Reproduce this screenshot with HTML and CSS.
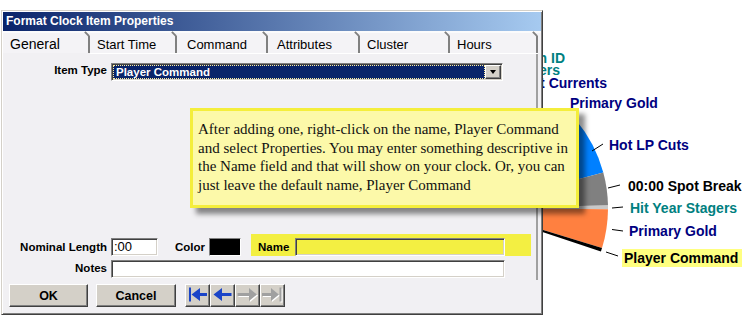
FILE: index.html
```html
<!DOCTYPE html>
<html lang="en">
<head>
  <meta charset="UTF-8">
  <title>Format Clock Item Properties</title>
  <link rel="stylesheet" href="styles.css">
</head>
<body>
  <!-- clock pie behind the dialog -->
  <svg class="chart" width="747" height="331" viewBox="0 0 747 331">
    <path fill="#0080ff" d="M471 208 L575.9 119.9 A137 137 0 0 1 603.3 172.5 Z"/>
    <path fill="#808080" d="M471 208 L603.3 172.5 A137 137 0 0 1 608 205.6 Z"/>
    <path fill="#c8c8c8" d="M471 208 L608 205.6 A137 137 0 0 1 608 209.2 Z"/>
    <path fill="#ff8040" d="M471 208 L608 209.2 A137 137 0 0 1 602 248.1 Z"/>
    <path fill="#000000" d="M471 208 L602 248.1 A137 137 0 0 1 600.9 251.5 Z"/>

    <g class="leaders">
      <line x1="592" y1="151" x2="603" y2="144"/>
      <line x1="608" y1="188" x2="620" y2="185"/>
      <line x1="612" y1="208" x2="623" y2="207"/>
      <line x1="612" y1="229.5" x2="623" y2="231"/>
      <line x1="606" y1="252" x2="618" y2="256"/>
    </g>

    <rect x="622" y="249" width="120" height="18" fill="#ffff80"/>

    <text class="lbl teal" x="565" y="63" text-anchor="end">Station ID</text>
    <text class="lbl teal" x="560" y="75" text-anchor="end">Stagers</text>
    <text class="lbl navy" x="607" y="88" text-anchor="end">Hot Currents</text>
    <text class="lbl navy" x="570" y="108">Primary Gold</text>
    <text class="lbl navy" x="609" y="150">Hot LP Cuts</text>
    <text class="lbl" x="628" y="191">00:00 Spot Break</text>
    <text class="lbl teal" x="630" y="213">Hit Year Stagers</text>
    <text class="lbl navy" x="629" y="236">Primary Gold</text>
    <text class="lbl" x="624" y="263">Player Command</text>
  </svg>

  <div class="dialog">
    <div class="titlebar">Format Clock Item Properties</div>

    <div class="tabs">
      <div class="tab tab-general">General</div>
      <div class="tab tab-start">Start Time</div>
      <div class="tab tab-command">Command</div>
      <div class="tab tab-attributes">Attributes</div>
      <div class="tab tab-cluster">Cluster</div>
      <div class="tab tab-hours">Hours</div>
    </div>

    <div class="panel">
      <div class="row row-type">
        <label class="field-label">Item Type</label>
        <div class="select">
          <div class="select-value">Player Command</div>
          <div class="select-btn"><span class="caret"></span></div>
        </div>
      </div>

      <div class="row row-nominal">
        <label class="field-label">Nominal Length</label>
        <div class="input input-length">:00</div>
        <label class="color-label">Color</label>
        <div class="swatch"></div>
        <div class="name-band">
          <label class="name-label">Name</label>
          <div class="input input-name"></div>
        </div>
      </div>

      <div class="row row-notes">
        <label class="field-label">Notes</label>
        <div class="input input-notes"></div>
      </div>
    </div>

    <div class="buttons">
      <button class="btn btn-ok">OK</button>
      <button class="btn btn-cancel">Cancel</button>
      <div class="nav">
        <button class="btn nav-btn">
          <svg width="23" height="21" viewBox="0 0 23 21">
            <rect class="arrow-on" x="3" y="2.5" width="2" height="14"/>
            <polygon class="arrow-on" points="5.5,9.5 14,3 14,8 21,8 21,11 14,11 14,16"/>
          </svg>
        </button>
        <button class="btn nav-btn">
          <svg width="23" height="21" viewBox="0 0 23 21">
            <polygon class="arrow-on" points="2.5,9.5 11,3 11,8 20.5,8 20.5,11 11,11 11,16"/>
          </svg>
        </button>
        <button class="btn nav-btn">
          <svg width="23" height="21" viewBox="0 0 23 21">
            <polygon class="arrow-shade" transform="translate(1 1)" points="1.5,8 13,8 13,3 21,9.5 13,16 13,11 1.5,11"/>
            <polygon class="arrow-off" points="1.5,8 13,8 13,3 21,9.5 13,16 13,11 1.5,11"/>
          </svg>
        </button>
        <button class="btn nav-btn">
          <svg width="23" height="21" viewBox="0 0 23 21">
            <g class="arrow-shade" transform="translate(1 1)">
              <polygon points="1,8 10,8 10,3 18,9.5 10,16 10,11 1,11"/>
              <rect x="18.5" y="2.5" width="2" height="14"/>
            </g>
            <polygon class="arrow-off" points="1,8 10,8 10,3 18,9.5 10,16 10,11 1,11"/>
            <rect class="arrow-off" x="18.5" y="2.5" width="2" height="14"/>
          </svg>
        </button>
      </div>
    </div>
  </div>

  <div class="tip">After adding one, right-click on the name, Player Command<br>and select Properties. You may enter something descriptive in<br>the Name field and that will show on your clock. Or, you can<br>just leave the default name, Player Command</div>
</body>
</html>
```

FILE: styles.css
```css
body {
  margin: 0;
  width: 747px;
  height: 331px;
  position: relative;
  overflow: hidden;
  background-color: #fff;
  font-family: "Liberation Sans", Arial, sans-serif;
  color: #000;
}

/* pie chart canvas */
.chart {
  position: absolute;
  left: 0;
  top: 0;
}

.leaders line {
  stroke: #000;
  stroke-width: 1;
}

.lbl {
  font-family: "Liberation Sans", Arial, sans-serif;
  font-weight: bold;
  font-size: 14px;
  fill: #000;
}

.lbl.navy {
  fill: #000080;
}

.lbl.teal {
  fill: #008080;
}

/* dialog window */
.dialog {
  position: relative;
  z-index: 1;
  width: 542px;
  height: 305px;
  margin: 10px 0 0 1px;
  padding: 1px;
  box-sizing: border-box;
  background-color: #f1f0f3;
  border: 1px solid;
  border-color: #d4d0c8 #404040 #404040 #d4d0c8;
  box-shadow: inset 1px 1px #fff, inset -1px -1px #808080;
}

.titlebar {
  height: 19px;
  line-height: 19px;
  padding-left: 3px;
  background: linear-gradient(to right, #0a246a, #a6caf0);
  color: #fff;
  font-weight: bold;
  font-size: 12px;
  white-space: nowrap;
}

.tabs {
  display: flex;
  height: 22px;
  border-top: 2px solid #fbfbfc;
  box-sizing: border-box;
  background-color: #f4f3f6;
}

.tab {
  position: relative;
  height: 17px;
  margin-top: 3px;
  box-sizing: border-box;
  border-right: 2px solid #808080;
  font-size: 13px;
  line-height: 17px;
  padding-left: 7px;
  white-space: nowrap;
}

.tab::before {
  content: "";
  position: absolute;
  right: 0;
  top: -5px;
  width: 2px;
  height: 6px;
  background-color: #808080;
  transform: rotate(-45deg);
}

.tab + .tab {
  box-shadow: 0 1px #fff;
}

.tab-general {
  width: 87px;
  font-size: 14px;
}

.tab-start {
  width: 87px;
}

.tab-command {
  width: 91px;
  padding-left: 10px;
}

.tab-attributes {
  width: 92px;
  padding-left: 9px;
}

.tab-cluster {
  width: 90px;
}

.tab-hours {
  width: 88px;
}

/* general page */
.panel {
  width: 535px;
  height: 227px;
  box-sizing: border-box;
  padding-top: 10px;
  border-right: 2px solid #a0a0a0;
}

.row {
  display: flex;
}

.field-label,
.color-label,
.name-label {
  font-weight: bold;
  font-size: 11.5px;
  line-height: 17px;
  white-space: nowrap;
}

.field-label {
  width: 104px;
  margin-right: 4px;
  text-align: right;
}

.row-type {
  height: 18px;
}

.row-type .field-label {
  line-height: 15px;
}

.select {
  display: flex;
  width: 392px;
  height: 18px;
  box-sizing: border-box;
  padding: 1px;
  border: 1px solid;
  border-color: #808080 #fff #fff #808080;
  box-shadow: inset 1px 1px #404040, inset -1px -1px #d4d0c8;
  background-color: #fff;
}

.select-value {
  flex: 1;
  box-sizing: border-box;
  border: 1px dotted #fff0a0;
  background-color: #0a246a;
  color: #fff;
  font-weight: bold;
  font-size: 11.5px;
  line-height: 12px;
  padding-left: 2px;
}

.select-btn {
  display: flex;
  align-items: center;
  justify-content: center;
  width: 16px;
  box-sizing: border-box;
  background-color: #d4d0c8;
  border: 1px solid;
  border-color: #fff #404040 #404040 #fff;
  box-shadow: inset -1px -1px #808080;
}

.caret {
  width: 0;
  height: 0;
  border-left: 3.5px solid transparent;
  border-right: 3.5px solid transparent;
  border-top: 4px solid #000;
}

.row-nominal {
  height: 22px;
  margin-top: 153px;
  align-items: flex-end;
}

.input {
  height: 18px;
  box-sizing: border-box;
  border: 1px solid;
  border-color: #808080 #fff #fff #808080;
  box-shadow: inset 1px 1px #404040, inset -1px -1px #d4d0c8;
  background-color: #fff;
  font-size: 13px;
  line-height: 16px;
  padding-left: 2px;
}

.input-length {
  width: 47px;
}

.color-label {
  width: 34px;
  margin-left: 17px;
}

.swatch {
  width: 32px;
  height: 18px;
  box-sizing: border-box;
  border: 1px solid;
  border-color: #808080 #fff #fff #808080;
  background-color: #000;
}

.name-band {
  display: flex;
  align-items: flex-end;
  width: 280px;
  height: 22px;
  margin-left: 10px;
  padding-left: 7px;
  box-sizing: border-box;
  background-color: #f3ef42;
}

.name-label {
  width: 37px;
}

.input-name {
  width: 210px;
  background-color: #f3ef42;
}

.row-notes {
  height: 18px;
  margin-top: 4px;
}

.input-notes {
  width: 394px;
}

/* command buttons */
.buttons {
  display: flex;
  margin-top: 4px;
  padding-left: 6px;
}

.btn {
  height: 23px;
  padding: 0;
  box-sizing: border-box;
  background-color: #d4d0c8;
  border: 1px solid;
  border-color: #fff #404040 #404040 #fff;
  box-shadow: inset -1px -1px #808080;
  font-family: "Liberation Sans", Arial, sans-serif;
  font-weight: bold;
  font-size: 12.5px;
  color: #000;
}

.btn-ok {
  width: 79px;
}

.btn-cancel {
  width: 80px;
  margin-left: 8px;
}

.nav {
  display: flex;
  margin-left: 9px;
}

.nav-btn {
  width: 25px;
}

.nav-btn svg {
  display: block;
}

.arrow-on {
  fill: #1a44c8;
}

.arrow-off {
  fill: #a0a0a0;
}

.arrow-shade {
  fill: #fff;
}

/* yellow callout */
.tip {
  position: absolute;
  z-index: 2;
  left: 190px;
  top: 108px;
  width: 389px;
  height: 100px;
  box-sizing: border-box;
  padding: 9px 0 0 5px;
  border: 3px solid #f4ee3c;
  background-color: #fcf9a9;
  box-shadow: 6px 6px 5px rgba(0, 0, 0, 0.45);
  font-family: "Liberation Serif", "Times New Roman", serif;
  font-size: 15px;
  line-height: 18.5px;
  color: #111;
  white-space: nowrap;
}
```
